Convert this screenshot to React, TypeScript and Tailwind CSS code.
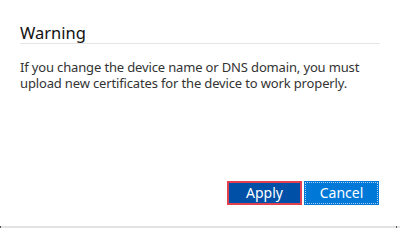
import React from 'react'

export default function App() {
  return (
    <div
      className="w-[400px] h-[228px] bg-white flex flex-col overflow-hidden"
      style={{ fontFamily: '"Noto Sans", "Open Sans", sans-serif' }}
    >
      <div className="flex-1 flex flex-col px-5 pt-[22px]">
        {/* Header */}
        <div className="text-[16.5px] leading-[21px] text-[#111] border-b border-[#e6e6e6]">
          Warning
        </div>

        {/* Body */}
        <p className="mt-[15px] text-[13px] leading-[16px] text-[#333] tracking-[-0.15px]">
          If you change the device name or DNS domain, you must upload new certificates for the device to work properly.
        </p>

        {/* Actions */}
        <div className="mt-auto mb-[21px] flex justify-end gap-[2px] pr-[1px]">
          <button className="w-[75px] h-[24px] bg-[#0050a8] border-2 border-[#e0404f] text-white text-[14px] leading-none">
            Apply
          </button>
          <button className="w-[75px] h-[24px] bg-[#0078d7] text-white text-[14px] leading-none p-[1px]">
            <span className="flex items-center justify-center w-full h-full border border-dotted border-[#a8d0f2]">
              Cancel
            </span>
          </button>
        </div>
      </div>

      {/* Bottom edge */}
      <div className="h-[2px] bg-[#e2e2e2] flex justify-between">
        <span className="w-[1px] h-full bg-[#555]" />
        <span className="w-[1px] h-full bg-[#555] mr-[3px]" />
      </div>
    </div>
  )
}
